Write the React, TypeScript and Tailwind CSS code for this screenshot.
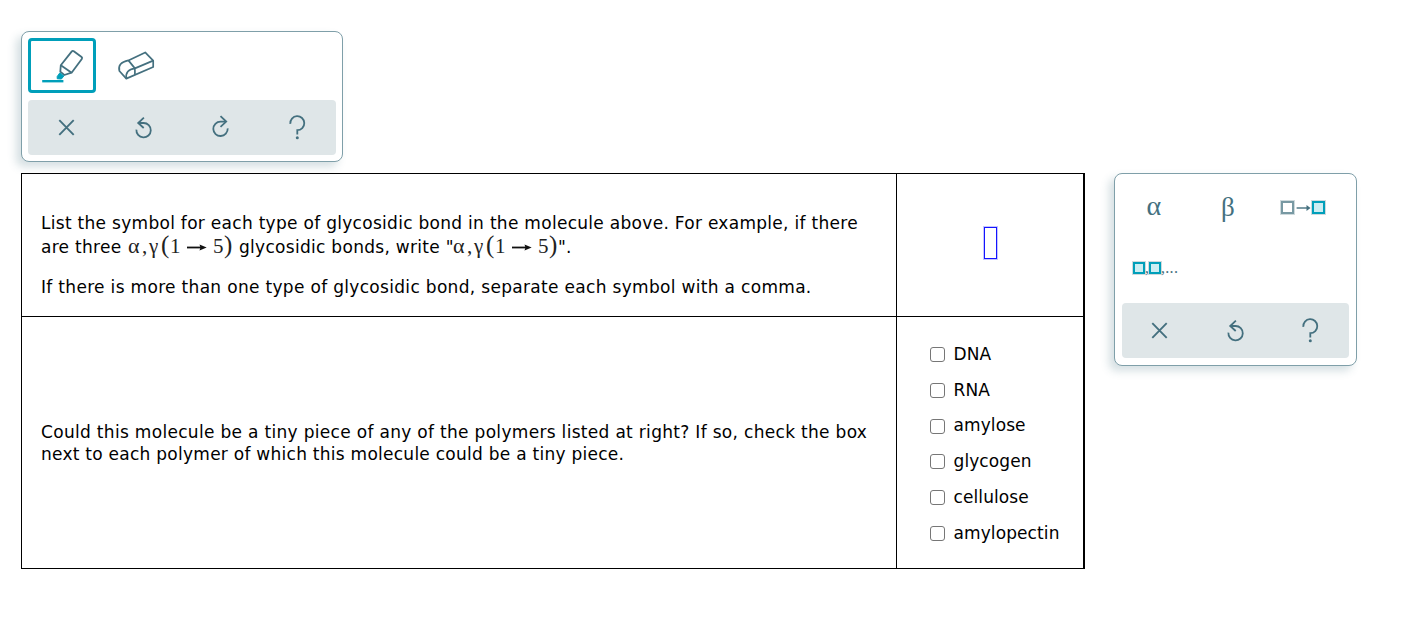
import React from 'react';

const CloseIcon: React.FC = () => (
    <svg width="24" height="28" viewBox="0 0 24 28" fill="none" stroke="#44707f" strokeWidth="1.9">
        <path d="M4.3 6.2 18.7 20.8M18.7 6.2 4.3 20.8" />
    </svg>
);

const UndoIcon: React.FC = () => (
    <svg width="24" height="28" viewBox="0 0 24 28" fill="none" stroke="#44707f" strokeWidth="1.8">
        <path d="M4.4 15.6A7.2 7.2 0 1 0 11.6 9H6.6" />
        <path d="M11.9 3.6 6.2 9l5.5 5" />
    </svg>
);

const RedoIcon: React.FC = () => (
    <svg width="24" height="28" viewBox="0 0 24 28" fill="none" stroke="#44707f" strokeWidth="1.8">
        <path d="M18.7 14.4A7.2 7.2 0 1 1 11.5 7.6h5.2" />
        <path d="M11.5 2.2 17.2 7.6l-5.7 5.2" />
    </svg>
);

const HelpIcon: React.FC = () => (
    <svg width="24" height="28" viewBox="0 0 24 28" fill="none" stroke="#44707f" strokeWidth="1.8">
        <path d="M4.3 9.8a7 7 0 1 1 7 6.4v4.2" />
        <circle cx="11.3" cy="23.8" r="1.5" fill="#44707f" stroke="none" />
    </svg>
);

const HighlighterIcon: React.FC = () => (
    <svg width="44" height="36" viewBox="40 48 44 36" fill="none" stroke="#44707f" strokeWidth="1.8" strokeLinejoin="round">
        <path d="M60.8 65.2 71.6 51.6Q72.6 50.4 73.8 51.2L81.6 57Q82.6 57.9 81.8 59L71.6 72.7 64.3 75 60.3 71.6Z" />
        <path d="m60.8 65.2 10.8 7.5" />
        <path d="M57.2 76.5 59.8 72.9 63.8 76 61.4 79 57.2 78.7Z" fill="#009fba" stroke="#009fba" strokeWidth="1" />
        <path d="M42.2 81.2h21.2" stroke="#009fba" strokeWidth="2.4" />
    </svg>
);

const EraserIcon: React.FC = () => (
    <svg width="40" height="32" viewBox="116.5 50 40 32" fill="none" stroke="#44707f" strokeWidth="1.7" strokeLinejoin="round">
        <path d="M128.9 60.4 145.7 52.4 153.7 60.6V67L126.8 78.6 119.9 71Q117.6 62.8 128.9 60.4Z" />
        <path d="M128.9 60.4 135.4 68.4 153.7 60.6M135.4 68.4V74.8M126.8 78.6Q125.6 69.6 135.4 68.4" />
    </svg>
);

const Arrow: React.FC = () => (
    <svg width="20" height="7" viewBox="0 0 20 7" className="mb-[2px] ml-px">
        <path d="M0 3.5h14" stroke="#111" strokeWidth="1.8" />
        <path d="m12.5.4 7.2 3.1-7.2 3.1 1-3.1Z" fill="#111" />
    </svg>
);

const tile = 'box-border shrink-0 border-2 outline outline-1 outline-[#cfdadd]';

const ToolRow: React.FC<{ children: React.ReactNode }> = ({ children }) => (
    <div className="flex h-[55px] rounded bg-[#dfe6e8]">
        {React.Children.map(children, child => (
            <button className="flex flex-1 items-center justify-center">{child}</button>
        ))}
    </div>
);

// alpha,gamma(1 -> 5)
const BondSymbol: React.FC = () => (
    <span className="inline-flex h-[24px] w-[105px] items-baseline font-['Liberation_Serif',serif] text-[21px] leading-[24px] tracking-normal text-[#222]">
        <span className="w-[14px] text-[22px]">α</span>
        <span className="w-[7px]">,</span>
        <span className="w-[12px]">γ</span>
        <span className="w-[9px] text-[25px]">(</span>
        <span className="w-[16px]">1</span>
        <span className="w-[27px]"><Arrow /></span>
        <span className="w-[11px]">5</span>
        <span className="w-[9px] text-[25px]">)</span>
    </span>
);

const polymers = ['DNA', 'RNA', 'amylose', 'glycogen', 'cellulose', 'amylopectin'];

const panel = 'rounded-lg border border-[#7f9fa9] bg-white p-[6px] shadow-[-5px_5px_9px_rgba(68,112,127,0.22)]';

const App: React.FC = () => {
    return (
        <div className="h-[640px] w-[1401px] overflow-hidden bg-white pl-[21px] pt-[31px] font-['DejaVu_Sans',sans-serif] text-[17px] text-black">
            <div className={`h-[131px] w-[322px] ${panel}`}>
                <div className="mb-[7px] flex h-[55px] gap-[6px]">
                    <button className="flex w-[68px] items-center justify-center rounded border-[3px] border-[#009fba]"><HighlighterIcon /></button>
                    <button className="flex w-[68px] items-center justify-center"><EraserIcon /></button>
                </div>
                <ToolRow>
                    <CloseIcon />
                    <UndoIcon />
                    <RedoIcon />
                    <HelpIcon />
                </ToolRow>
            </div>

            <div className="mt-[11px] flex items-start gap-[29px]">
                <div className="grid h-[396px] w-[1064px] grid-cols-[875px_1fr] grid-rows-[143px_1fr] border border-r-2 border-black">
                    <div className="whitespace-nowrap border-b border-r border-black pl-[19px] pt-[37px] tracking-[0.29px]">
                        <p className="h-[22px] leading-[24px]">List the symbol for each type of glycosidic bond in the molecule above. For example, if there</p>
                        <p className="flex h-[24px] items-baseline whitespace-pre leading-[24px]">
                            <span className="w-[87px]">are three</span>
                            <BondSymbol />
                            <span className="ml-[6px] w-[214px]">glycosidic bonds, write "</span>
                            <BondSymbol />
                            <span>".</span>
                        </p>
                        <p className="mt-[18px] h-[24px] leading-[24px] tracking-[0.315px]">If there is more than one type of glycosidic bond, separate each symbol with a comma.</p>
                    </div>
                    <div className="flex items-center justify-center border-b border-black">
                        <div className="mb-[4px] h-[32px] w-[13px] border border-[#1414ff] shadow-[0_0_0_1px_#c4c4ff]" />
                    </div>
                    <div className="flex flex-col justify-center whitespace-nowrap border-r border-black pl-[19px] leading-[22px] tracking-[0.31px]">
                        <p>Could this molecule be a tiny piece of any of the polymers listed at right? If so, check the box</p>
                        <p className="tracking-[0.26px]">next to each polymer of which this molecule could be a tiny piece.</p>
                    </div>
                    <div className="flex flex-col pl-[33px] pt-[19.7px]">
                        {polymers.map(name => (
                            <label key={name} className="flex h-[35.8px] items-center gap-[8.5px] tracking-[0.1px]">
                                <input type="checkbox" className="h-[15px] w-[15px] appearance-none rounded-[3px] border border-[#767676] bg-white" />
                                {name}
                            </label>
                        ))}
                    </div>
                </div>

                <div className={`h-[193px] w-[243px] ${panel}`}>
                    <div className="grid h-[123px] grid-cols-3 grid-rows-2 pl-px pr-px font-['Liberation_Serif',serif] text-[#44707f]">
                        <button className="flex h-[55px] items-center justify-center pb-[4px] pr-[12px] text-[28px] leading-none">α</button>
                        <button className="flex h-[55px] items-center justify-center pr-[15px] text-[27px] leading-none">β</button>
                        <button className="flex h-[55px] items-center justify-center pr-[16px]">
                            <span className={`h-[13px] w-[13px] border-[#7899a3] bg-white ${tile}`} />
                            <svg width="18" height="8" viewBox="0 0 18 8" className="shrink-0">
                                <path d="M2.6 4h11" stroke="#44707f" strokeWidth="1.4" />
                                <path d="m12.5 1 4 3-4 3Z" fill="#44707f" />
                            </svg>
                            <span className={`h-[13px] w-[13px] border-[#009fba] bg-[#cceef3] ${tile}`} />
                        </button>
                        <button className="flex h-[53px] items-center pl-[11px] text-[16px] leading-none">
                            <span className={`h-[12px] w-[12px] border-[#009fba] bg-[#cceef3] ${tile}`} />
                            <span className="w-[4px]">,</span>
                            <span className={`h-[12px] w-[12px] border-[#009fba] bg-[#cceef3] ${tile}`} />
                            <span className="tracking-[0.3px]">,...</span>
                        </button>
                    </div>
                    <div className="px-[1px]">
                        <ToolRow>
                            <CloseIcon />
                            <UndoIcon />
                            <HelpIcon />
                        </ToolRow>
                    </div>
                </div>
            </div>
        </div>
    );
};

export default App;
